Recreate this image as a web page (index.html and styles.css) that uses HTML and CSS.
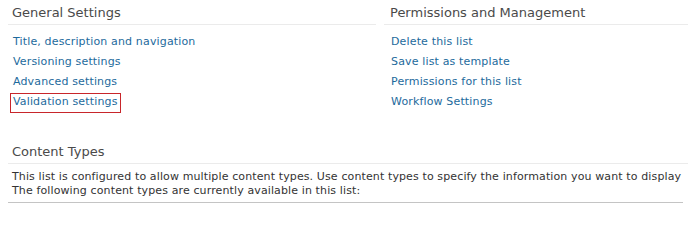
FILE: index.html
```html
<!DOCTYPE html>
<html lang="en">
<head>
<meta charset="utf-8">
<title>List Settings</title>
<link rel="stylesheet" href="styles.css">
</head>
<body>
<div class="page">
  <div class="cols">
    <section class="col">
      <h3 class="sec-head">General Settings</h3>
      <ul class="links">
        <li><a href="#">Title, description and navigation</a></li>
        <li><a href="#">Versioning settings</a></li>
        <li><a href="#">Advanced settings</a></li>
        <li><a href="#" class="highlight">Validation settings</a></li>
      </ul>
    </section>
    <section class="col col-right">
      <h3 class="sec-head">Permissions and Management</h3>
      <ul class="links">
        <li><a href="#">Delete this list</a></li>
        <li><a href="#">Save list as template</a></li>
        <li><a href="#">Permissions for this list</a></li>
        <li><a href="#">Workflow Settings</a></li>
      </ul>
    </section>
  </div>
  <section class="content-types">
    <h3 class="sec-head">Content Types</h3>
    <p class="ct-text">This list is configured to allow multiple content types. Use content types to specify the information you want to display<br>The following content types are currently available in this list:</p>
  </section>
</div>
</body>
</html>
```
FILE: styles.css
```css
html, body {
  margin: 0;
  padding: 0;
  background: #ffffff;
  overflow: hidden;
}
body {
  font-family: "DejaVu Sans", Verdana, sans-serif;
  font-size: 11px;
  color: #333333;
}
.page {
  width: 680px;
  padding-left: 8px;
}
.cols {
  display: grid;
  grid-template-columns: 368px 1fr;
  column-gap: 8px;
}
.sec-head {
  margin: 0;
  padding: 5px 0 3px 4px;
  font-size: 13px;
  line-height: 16px;
  font-weight: normal;
  color: #4a4a4a;
  border-bottom: 1px solid #ebebeb;
}
.col-right .sec-head {
  padding-left: 6px;
}
.links {
  list-style: none;
  margin: 7px 0 0 0;
  padding: 0 0 0 5px;
  letter-spacing: 0.15px;
}
.col-right .links {
  padding-left: 7px;
}
.links li {
  height: 20px;
  line-height: 20px;
}
.links a {
  color: #1d6a9c;
  text-decoration: none;
}
.links a.highlight {
  display: inline-block;
  line-height: 16px;
  margin-left: -3px;
  padding: 0 2px 2px 2px;
  border: 1px solid #c8262b;
}
.content-types {
  margin-top: 27px;
}
.ct-text {
  margin: 0 5px 0 0;
  padding: 6px 0 4px 4px;
  line-height: 14px;
  letter-spacing: 0.12px;
  white-space: nowrap;
  border-bottom: 1px solid #c4c4c4;
}
```
